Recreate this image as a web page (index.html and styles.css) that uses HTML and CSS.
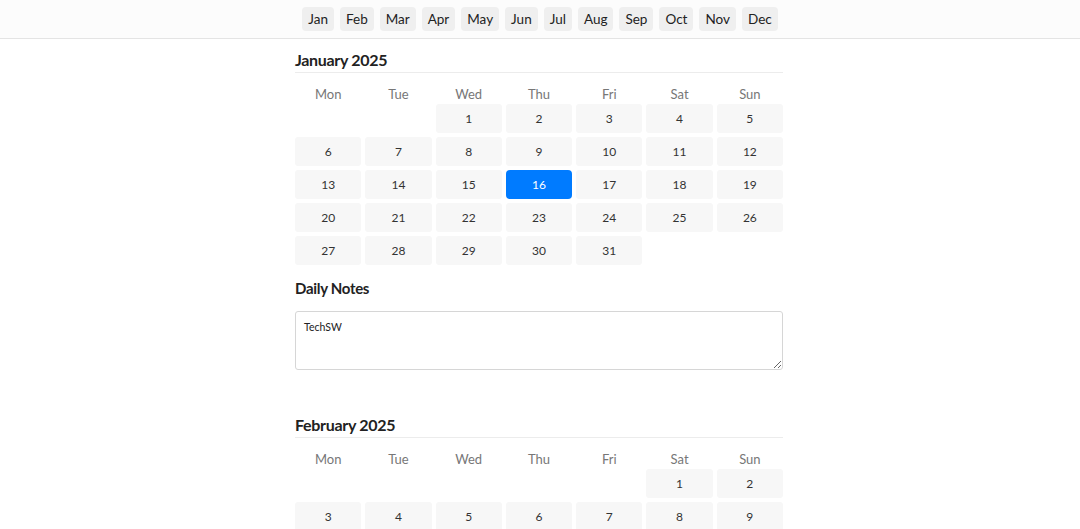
FILE: index.html
```html
<!DOCTYPE html>
<html lang="en">
<head>
<meta charset="utf-8">
<title>Calendar 2025</title>
<link rel="stylesheet" href="styles.css">
</head>
<body>
<header class="month-nav">
  <button class="nav-btn">Jan</button>
  <button class="nav-btn">Feb</button>
  <button class="nav-btn">Mar</button>
  <button class="nav-btn">Apr</button>
  <button class="nav-btn">May</button>
  <button class="nav-btn">Jun</button>
  <button class="nav-btn">Jul</button>
  <button class="nav-btn">Aug</button>
  <button class="nav-btn">Sep</button>
  <button class="nav-btn">Oct</button>
  <button class="nav-btn">Nov</button>
  <button class="nav-btn">Dec</button>
</header>
<main class="container">
  <section class="month">
    <h2 class="month-title">January 2025</h2>
    <div class="weekdays">
      <div>Mon</div><div>Tue</div><div>Wed</div><div>Thu</div><div>Fri</div><div>Sat</div><div>Sun</div>
    </div>
    <div class="days">
      <div class="blank"></div><div class="blank"></div>
      <div class="day">1</div><div class="day">2</div><div class="day">3</div><div class="day">4</div><div class="day">5</div>
      <div class="day">6</div><div class="day">7</div><div class="day">8</div><div class="day">9</div><div class="day">10</div><div class="day">11</div><div class="day">12</div>
      <div class="day">13</div><div class="day">14</div><div class="day">15</div><div class="day selected">16</div><div class="day">17</div><div class="day">18</div><div class="day">19</div>
      <div class="day">20</div><div class="day">21</div><div class="day">22</div><div class="day">23</div><div class="day">24</div><div class="day">25</div><div class="day">26</div>
      <div class="day">27</div><div class="day">28</div><div class="day">29</div><div class="day">30</div><div class="day">31</div>
    </div>
    <h3 class="notes-title">Daily Notes</h3>
    <textarea class="notes">TechSW</textarea>
  </section>
  <section class="month">
    <h2 class="month-title">February 2025</h2>
    <div class="weekdays">
      <div>Mon</div><div>Tue</div><div>Wed</div><div>Thu</div><div>Fri</div><div>Sat</div><div>Sun</div>
    </div>
    <div class="days">
      <div class="blank"></div><div class="blank"></div><div class="blank"></div><div class="blank"></div><div class="blank"></div>
      <div class="day">1</div><div class="day">2</div>
      <div class="day">3</div><div class="day">4</div><div class="day">5</div><div class="day">6</div><div class="day">7</div><div class="day">8</div><div class="day">9</div>
      <div class="day">10</div><div class="day">11</div><div class="day">12</div><div class="day">13</div><div class="day">14</div><div class="day">15</div><div class="day">16</div>
    </div>
  </section>
</main>
</body>
</html>
```

FILE: styles.css
```css
* {
  box-sizing: border-box;
}

body {
  margin: 0;
  font-family: Lato, "Noto Sans", sans-serif;
  color: #222;
  background: #fff;
}

.month-nav {
  height: 39px;
  display: flex;
  justify-content: center;
  align-items: center;
  gap: 6px;
  background: #fcfcfc;
  border-bottom: 1px solid #e4e4e4;
  padding-bottom: 1px;
}

.nav-btn {
  font-family: inherit;
  font-size: 13.5px;
  line-height: 16px;
  color: #222;
  background: #efefef;
  border: none;
  border-radius: 4px;
  padding: 4px 6px;
  height: 24px;
}

.container {
  width: 488px;
  margin: 0 auto;
  padding-top: 11px;
  position: relative;
  left: -1px;
}

.month {
  margin-bottom: 45px;
}

.month-title {
  margin: 0;
  font-size: 16px;
  letter-spacing: -0.3px;
  line-height: 20px;
  font-weight: 700;
  padding-bottom: 2px;
  border-bottom: 1px solid #ececec;
}

.weekdays {
  display: grid;
  grid-template-columns: repeat(7, 1fr);
  gap: 4px;
  margin-top: 12px;
  margin-bottom: 1px;
}

.weekdays div {
  text-align: center;
  font-size: 13px;
  line-height: 18px;
  color: #777;
}

.days {
  display: grid;
  grid-template-columns: repeat(7, 1fr);
  gap: 4px;
}

.day {
  height: 29px;
  line-height: 29px;
  text-align: center;
  font-size: 12px;
  color: #333;
  background: #f7f7f7;
  border-radius: 3px;
}

.day.selected {
  background: #007bff;
  color: #fff;
  border-radius: 4px;
}

.notes-title {
  margin: 13px 0 13px;
  font-size: 15px;
  letter-spacing: -0.3px;
  line-height: 20px;
  font-weight: 700;
}

.notes {
  display: block;
  width: 100%;
  height: 59px;
  padding: 7px 8px;
  font-family: inherit;
  font-size: 10.5px;
  line-height: 16px;
  color: #222;
  border: 1px solid #d6d6d6;
  border-radius: 3px;
  resize: vertical;
}
```
